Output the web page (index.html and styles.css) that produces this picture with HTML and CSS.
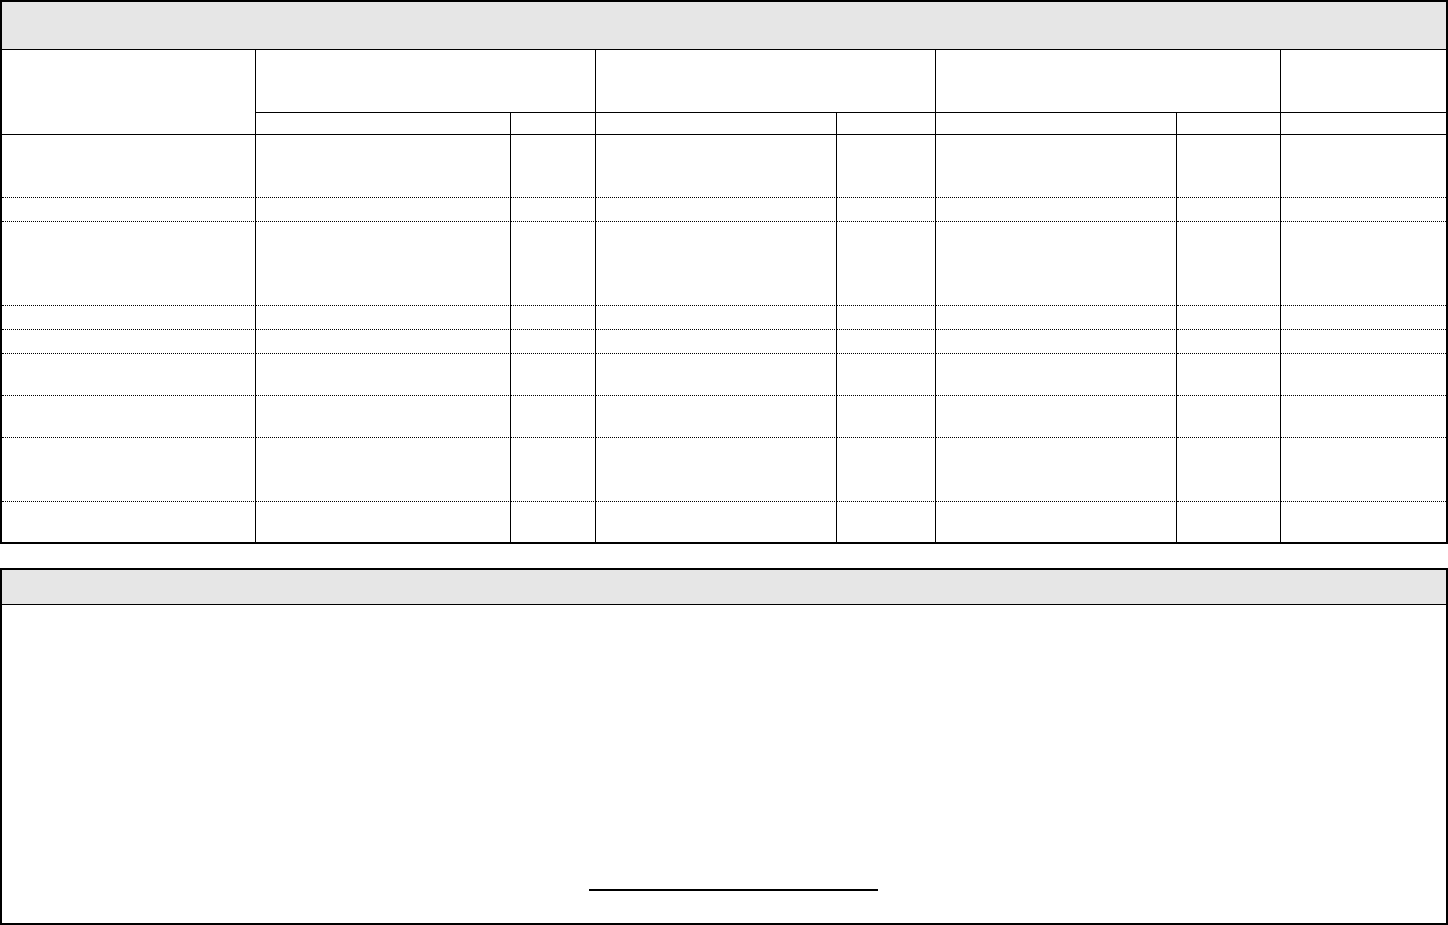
FILE: index.html
```html
<!DOCTYPE html>
<html lang="en">
<head>
<meta charset="utf-8">
<title>Form</title>
<link rel="stylesheet" href="styles.css">
</head>
<body>
<div class="box">
  <div class="box-head tall"></div>
  <div class="grid">
    <div class="c h1 col1 rs2"></div>
    <div class="c h1 span2"></div>
    <div class="c h1 span2"></div>
    <div class="c h1 span2"></div>
    <div class="c h1 last"></div>

    <div class="c h2"></div><div class="c h2"></div>
    <div class="c h2"></div><div class="c h2"></div>
    <div class="c h2"></div><div class="c h2"></div>
    <div class="c h2 last"></div>
  </div>
  <div class="rows">
    <div class="row r63"><div class="c"></div><div class="c"></div><div class="c"></div><div class="c"></div><div class="c"></div><div class="c"></div><div class="c"></div><div class="c last"></div></div>
    <div class="row r24"><div class="c"></div><div class="c"></div><div class="c"></div><div class="c"></div><div class="c"></div><div class="c"></div><div class="c"></div><div class="c last"></div></div>
    <div class="row r84"><div class="c"></div><div class="c"></div><div class="c"></div><div class="c"></div><div class="c"></div><div class="c"></div><div class="c"></div><div class="c last"></div></div>
    <div class="row r24"><div class="c"></div><div class="c"></div><div class="c"></div><div class="c"></div><div class="c"></div><div class="c"></div><div class="c"></div><div class="c last"></div></div>
    <div class="row r24"><div class="c"></div><div class="c"></div><div class="c"></div><div class="c"></div><div class="c"></div><div class="c"></div><div class="c"></div><div class="c last"></div></div>
    <div class="row r42"><div class="c"></div><div class="c"></div><div class="c"></div><div class="c"></div><div class="c"></div><div class="c"></div><div class="c"></div><div class="c last"></div></div>
    <div class="row r42"><div class="c"></div><div class="c"></div><div class="c"></div><div class="c"></div><div class="c"></div><div class="c"></div><div class="c"></div><div class="c last"></div></div>
    <div class="row r64"><div class="c"></div><div class="c"></div><div class="c"></div><div class="c"></div><div class="c"></div><div class="c"></div><div class="c"></div><div class="c last"></div></div>
    <div class="row r40 end"><div class="c"></div><div class="c"></div><div class="c"></div><div class="c"></div><div class="c"></div><div class="c"></div><div class="c"></div><div class="c last"></div></div>
  </div>
</div>

<div class="box box2">
  <div class="box-head short"></div>
  <div class="box-body">
    <div class="sign-line"></div>
  </div>
</div>
</body>
</html>
```

FILE: styles.css
```css
* { box-sizing: border-box; }
html, body {
  margin: 0;
  padding: 0;
  background: #ffffff;
  font-family: "Liberation Sans", Arial, sans-serif;
}
body { width: 1448px; height: 925px; overflow: hidden; }

.box {
  width: 1448px;
  border: 2px solid #000;
}
.box-head {
  background: #e6e6e6;
  border-bottom: 1px solid #000;
}
.box-head.tall { height: 48px; }
.box-head.short { height: 35px; }

.grid {
  display: grid;
  grid-template-columns: 254px 255px 85px 241px 99px 241px 104px 165px;
  grid-template-rows: 63px 22px;
}
.c {
  border-right: 1px solid #000;
  border-bottom: 1px solid #000;
}
.c.last { border-right: none; }
.rs2 { grid-row: span 2; }
.span2 { grid-column: span 2; }

.rows { display: flex; flex-direction: column; }
.row {
  display: grid;
  grid-template-columns: 254px 255px 85px 241px 99px 241px 104px 165px;
}
.row .c {
  border-bottom: 1px dotted #000;
}
.row.end .c { border-bottom: none; }
.r63 { height: 63px; }
.r24 { height: 24px; }
.r84 { height: 84px; }
.r42 { height: 42px; }
.r64 { height: 64px; }
.r40 { height: 40px; }

.box2 { margin-top: 24px; }
.box-body {
  height: 318px;
  display: flex;
  flex-direction: column;
  justify-content: flex-end;
  padding-bottom: 32px;
}
.sign-line {
  margin-left: 587px;
  width: 289px;
  height: 2px;
  background: #000;
}
```
